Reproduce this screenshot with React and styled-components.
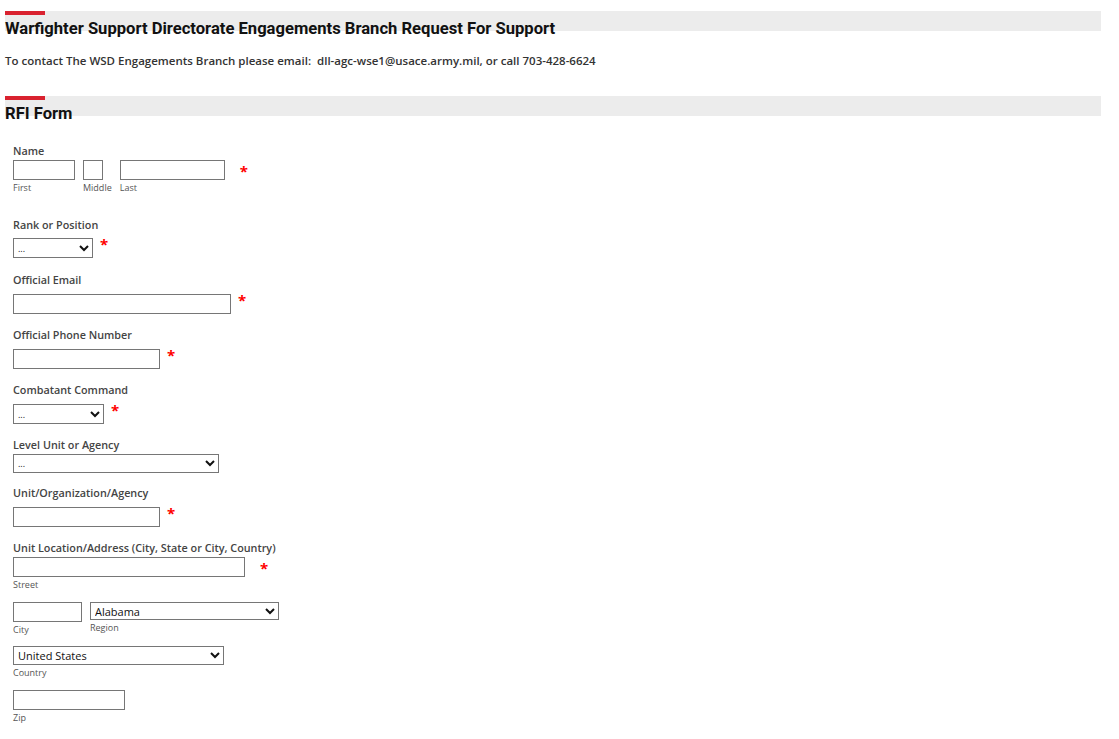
import React from 'react';
import styled, { createGlobalStyle } from 'styled-components';

const GlobalStyle = createGlobalStyle`
  body {
    margin: 0;
    background: #fff;
    font-family: "Open Sans", "Liberation Sans", sans-serif;
    color: #333;
  }
`;

const Page = styled.div`
  margin: 0 18px 0 5px;
  padding-top: 11px;
`;

const SectionTitle = styled.h2`
  margin: 0;
  padding-top: 8px;
  font-family: Roboto, "Liberation Sans", sans-serif;
  font-size: 16.6px;
  font-weight: 700;
  line-height: 20px;
  color: #111;
  background: linear-gradient(#ececec, #ececec) no-repeat top left / 100% 20px;
  position: relative;

  &::before {
    content: '';
    position: absolute;
    left: 0;
    top: 0;
    width: 40px;
    height: 4px;
    background: #d9222f;
  }
`;

const Contact = styled.p`
  margin: 14px 0 28px;
  font-size: 11.5px;
  line-height: 15px;
  font-weight: 600;
  color: #333;
  white-space: pre;
`;

const Form = styled.form`
  padding: 19px 0 0 8px;
  display: flex;
  flex-direction: column;
`;

const Field = styled.div`
  display: flex;
  flex-direction: column;
  align-items: flex-start;
  margin-bottom: ${(p) => p.$mb ?? 13}px;
`;

const Label = styled.label`
  font-size: 10.8px;
  line-height: 15px;
  font-weight: 600;
  color: #444;
  margin-bottom: ${(p) => p.$gap ?? 6}px;
`;

const Row = styled.div`
  display: flex;
  align-items: flex-start;
  gap: ${(p) => p.$gap ?? 0}px;
`;

const Part = styled.div`
  display: flex;
  flex-direction: column;
  margin-right: ${(p) => p.$mr ?? 0}px;
  margin-top: ${(p) => p.$mt ?? 0}px;
`;

const Input = styled.input`
  box-sizing: border-box;
  width: ${(p) => p.$w}px;
  height: 20px;
  margin: 0;
  padding: 0 3px;
  border: 1px solid #767676;
  border-radius: 0;
  background: #fff;
  font-family: "Open Sans", sans-serif;
  font-size: 12px;
`;

const Select = styled.select`
  box-sizing: border-box;
  width: ${(p) => p.$w}px;
  height: ${(p) => p.$h ?? 20}px;
  margin: 0;
  padding: 0;
  border: 1px solid #767676;
  border-radius: 0;
  background: #fff;
  color: #111;
  font-family: "Open Sans", sans-serif;
  font-size: ${(p) => (p.$small ? 9 : 11)}px;
`;

const Sub = styled.span`
  font-size: 9px;
  line-height: 12px;
  color: #555;
  margin-top: 2px;
`;

const Star = styled.span`
  color: #ff0000;
  font-weight: 700;
  font-size: 15px;
  line-height: 14px;
  margin-left: ${(p) => p.$ml ?? 7}px;
  margin-top: ${(p) => p.$mt ?? -1}px;
`;

const Group = styled.div`
  display: flex;
  flex-direction: column;
  gap: ${(p) => p.$gap ?? 11}px;
`;

export default function App() {
  return (
    <Page>
      <GlobalStyle />
      <SectionTitle>Warfighter Support Directorate Engagements Branch Request For Support</SectionTitle>
      <Contact>To contact The WSD Engagements Branch please email:  dll-agc-wse1@usace.army.mil, or call 703-428-6624</Contact>
      <SectionTitle>RFI Form</SectionTitle>
      <Form>
        <Field $mb={23}>
          <Label $gap={2}>Name</Label>
          <Row>
            <Part $mr={8}>
              <Input $w={62} />
              <Sub>First</Sub>
            </Part>
            <Part $mr={8}>
              <Input $w={20} />
              <Sub>Middle</Sub>
            </Part>
            <Part>
              <Input $w={105} />
              <Sub>Last</Sub>
            </Part>
            <Star $ml={15} $mt={4}>*</Star>
          </Row>
        </Field>

        <Field $mb={14}>
          <Label>Rank or Position</Label>
          <Row>
            <Select $w={80} $small><option>...</option></Select>
            <Star>*</Star>
          </Row>
        </Field>

        <Field>
          <Label $gap={7}>Official Email</Label>
          <Row>
            <Input $w={218} />
            <Star>*</Star>
          </Row>
        </Field>

        <Field>
          <Label $gap={7}>Official Phone Number</Label>
          <Row>
            <Input $w={147} />
            <Star>*</Star>
          </Row>
        </Field>

        <Field>
          <Label $gap={7}>Combatant Command</Label>
          <Row>
            <Select $w={91} $small><option>...</option></Select>
            <Star>*</Star>
          </Row>
        </Field>

        <Field $mb={12}>
          <Label $gap={2}>Level Unit or Agency</Label>
          <Select $w={206} $h={19} $small><option>...</option></Select>
        </Field>

        <Field>
          <Label $gap={7}>Unit/Organization/Agency</Label>
          <Row>
            <Input $w={147} />
            <Star>*</Star>
          </Row>
        </Field>

        <Field $mb={0}>
          <Label $gap={2}>Unit Location/Address (City, State or City, Country)</Label>
          <Group>
            <Row>
              <Part>
                <Input $w={232} />
                <Sub>Street</Sub>
              </Part>
              <Star $ml={15} $mt={4}>*</Star>
            </Row>
            <Row $gap={8}>
              <Part>
                <Input $w={69} />
                <Sub>City</Sub>
              </Part>
              <Part>
                <Select $w={189} $h={18}><option>Alabama</option></Select>
                <Sub>Region</Sub>
              </Part>
            </Row>
            <Part $mt={-1}>
              <Select $w={211} $h={19}><option>United States</option></Select>
              <Sub>Country</Sub>
            </Part>
            <Part>
              <Input $w={112} />
              <Sub>Zip</Sub>
            </Part>
          </Group>
        </Field>
      </Form>
    </Page>
  );
}
